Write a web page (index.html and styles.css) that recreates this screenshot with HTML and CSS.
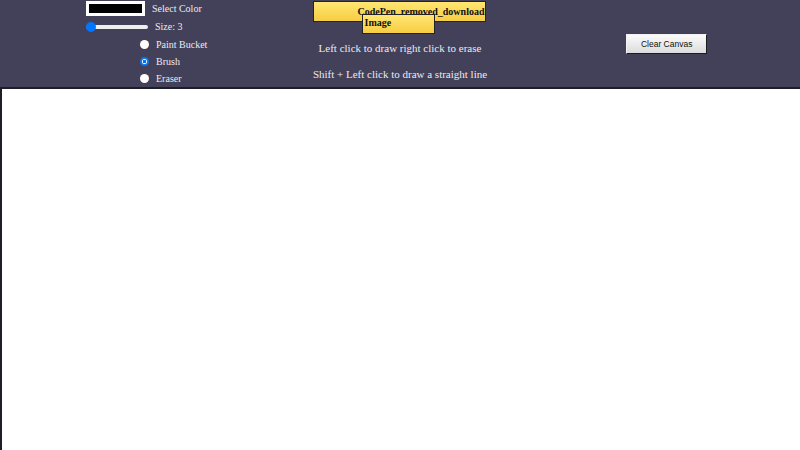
FILE: index.html
```html
<!DOCTYPE html>
<html>
<head>
<meta charset="utf-8">
<link rel="stylesheet" href="styles.css">
</head>
<body>
<header class="toolbar">
  <div class="tools">
    <div class="row">
      <span class="swatch"></span>
      <span class="label">Select Color</span>
    </div>
    <div class="row">
      <span class="range"><span class="fill"></span><span class="thumb"></span></span>
      <span class="label">Size: 3</span>
    </div>
    <div class="row radio-row">
      <span class="radio"></span>
      <span class="label">Paint Bucket</span>
    </div>
    <div class="row radio-row">
      <span class="radio checked"></span>
      <span class="label">Brush</span>
    </div>
    <div class="row radio-row">
      <span class="radio"></span>
      <span class="label">Eraser</span>
    </div>
  </div>
  <div class="center">
    <div class="download">
      <span class="dl-main">CodePen_removed_download</span>
      <span class="dl-sub">Image</span>
    </div>
    <p class="hint hint-1">Left click to draw right click to erase</p>
    <p class="hint hint-2">Shift + Left click to draw a straight line</p>
  </div>
  <div class="actions">
    <button class="clear">Clear Canvas</button>
  </div>
</header>
<div class="canvas"></div>
</body>
</html>
```

FILE: styles.css
```css
html, body {
  margin: 0;
  padding: 0;
  background: #ffffff;
  overflow: hidden;
}

.toolbar {
  height: 87px;
  background: #434059;
  display: grid;
  grid-template-columns: 1fr 1fr 1fr;
  font-family: "Liberation Serif", "Times New Roman", serif;
  color: #ecebf2;
}

.tools {
  padding-left: 86px;
  display: flex;
  flex-direction: column;
}

.row {
  display: flex;
  align-items: center;
  gap: 7px;
  height: 17px;
  font-size: 10px;
}

.row:nth-child(2) {
  height: 19px;
}

.radio-row {
  padding-left: 54px;
  gap: 7px;
}

.swatch {
  width: 53px;
  height: 9px;
  background: #000;
  border: 3px solid #fff;
}

.range {
  position: relative;
  width: 62px;
  height: 4px;
  border-radius: 2px;
  background: #efefef;
}

.range .fill {
  position: absolute;
  left: 0;
  top: 0;
  width: 5px;
  height: 4px;
  border-radius: 2px 0 0 2px;
  background: #0075ff;
}

.range .thumb {
  position: absolute;
  left: 0;
  top: -3px;
  width: 10px;
  height: 10px;
  border-radius: 50%;
  background: #0075ff;
}

.radio {
  width: 9px;
  height: 9px;
  border-radius: 50%;
  background: #ffffff;
  flex: none;
}

.radio.checked {
  box-sizing: border-box;
  width: 9px;
  height: 9px;
  border: 2px solid #0a78f0;
  background: radial-gradient(circle, #0a6fe0 0 1.6px, #ffffff 2px);
}

.center {
  display: flex;
  flex-direction: column;
  align-items: center;
}

.download {
  position: relative;
  margin-top: 1px;
  width: 171px;
  height: 19px;
  border: 1px solid #222228;
  background: linear-gradient(#ffe672, #f6cd42);
  font-size: 10px;
  font-weight: bold;
  color: #111;
  text-align: right;
  line-height: 19px;
}

.dl-main {
  display: block;
  padding-right: 1px;
}

.dl-sub {
  position: absolute;
  left: 48px;
  top: 12px;
  width: 70px;
  height: 18px;
  padding-left: 1px;
  border: 1px solid #222228;
  background: linear-gradient(#ffe672, #f6cd42);
  text-align: left;
  line-height: 16px;
}

.hint {
  margin: 0;
  font-size: 11px;
  line-height: 14px;
  white-space: nowrap;
}

.hint-1 {
  margin-top: 19px;
}

.hint-2 {
  margin-top: 12px;
}

.actions {
  display: flex;
  align-items: center;
  justify-content: center;
  padding-top: 1px;
}

.clear {
  width: 81px;
  height: 20px;
  padding: 0;
  font-family: "Liberation Sans", Arial, sans-serif;
  font-size: 8.5px;
  color: #111;
  background: linear-gradient(#fbfbfb, #dcdcdc);
  border: 1px solid;
  border-color: #f2f2f2 #1c1c1c #1c1c1c #f2f2f2;
}

.canvas {
  box-sizing: border-box;
  width: 100%;
  height: calc(100vh - 87px);
  background: #ffffff;
  border-top: 2px solid #1e1e26;
  border-left: 2px solid #1e1e26;
}
```
